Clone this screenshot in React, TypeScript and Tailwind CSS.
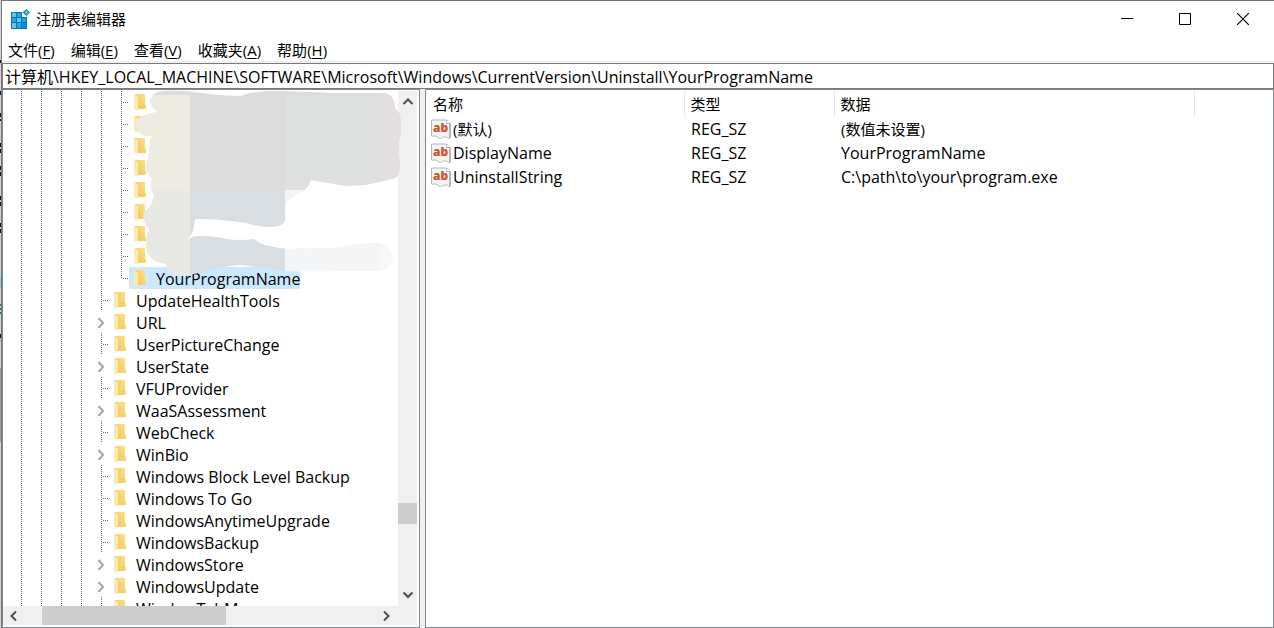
import React from 'react';

interface TreeNode {
    name: string;
    depth: number;
    expandable?: boolean;
    selected?: boolean;
}

interface RegistryValue {
    name: string;
    type: string;
    data: string;
    isDefault?: boolean;
}

const menus = [
    { label: '文件', hotkey: 'F' },
    { label: '编辑', hotkey: 'E' },
    { label: '查看', hotkey: 'V' },
    { label: '收藏夹', hotkey: 'A' },
    { label: '帮助', hotkey: 'H' },
];

const nodes: TreeNode[] = [
    ...Array.from({ length: 8 }, () => ({ name: '', depth: 5 })),
    { name: 'YourProgramName', depth: 5, selected: true },
    { name: 'UpdateHealthTools', depth: 4 },
    { name: 'URL', depth: 4, expandable: true },
    { name: 'UserPictureChange', depth: 4 },
    { name: 'UserState', depth: 4, expandable: true },
    { name: 'VFUProvider', depth: 4 },
    { name: 'WaaSAssessment', depth: 4, expandable: true },
    { name: 'WebCheck', depth: 4 },
    { name: 'WinBio', depth: 4, expandable: true },
    { name: 'Windows Block Level Backup', depth: 4 },
    { name: 'Windows To Go', depth: 4 },
    { name: 'WindowsAnytimeUpgrade', depth: 4 },
    { name: 'WindowsBackup', depth: 4 },
    { name: 'WindowsStore', depth: 4, expandable: true },
    { name: 'WindowsUpdate', depth: 4, expandable: true },
    { name: 'WindowTabManager', depth: 4 },
];

const values: RegistryValue[] = [
    { name: '(默认)', type: 'REG_SZ', data: '(数值未设置)', isDefault: true },
    { name: 'DisplayName', type: 'REG_SZ', data: 'YourProgramName' },
    { name: 'UninstallString', type: 'REG_SZ', data: 'C:\\path\\to\\your\\program.exe' },
];

const RegeditIcon = () => (
    <svg className="w-5 h-5" viewBox="0 0 20 20" aria-hidden="true">
        <path d="M1 3h11v5h5v12H1z" fill="#0a76b4" />
        <path d="M2 4h4v4H2zM7 9h4v4H7zM2 14h4v5H2z" fill="#5cc8f2" />
        <path d="M7 4h4v4H7zM2 9h4v4H2zM12 9h4v4h-4zM7 14h4v5H7z" fill="#27a3e0" />
        <path d="M12 14h4v5h-4z" fill="#0f8fd2" />
        <path d="M16.500 0l3.500 3.500-3.500 3.500-4-3.500z" fill="#1c85b8" />
        <path d="M16.500 1.500l2 2-2 2-2-2z" fill="#6cc3e6" />
    </svg>
);

const FolderIcon = () => (
    <svg className="w-3 h-[18px] shrink-0" viewBox="0 0 12 18" aria-hidden="true">
        <defs>
            <linearGradient id="folder" x1="0" x2="1" y1="1" y2="0">
                <stop offset="0" stopColor="#eec65f" />
                <stop offset="1" stopColor="#fbe08a" />
            </linearGradient>
        </defs>
        <path d="M1 1h10v11h1v4H3z" fill="url(#folder)" />
        <path d="M0 1l4 2.500v12l-1 2.500L0 15.500z" fill="#ffe9a6" />
    </svg>
);

const StringIcon = () => (
    <svg className="w-5 h-5 shrink-0" viewBox="0 0 20 20" aria-hidden="true">
        <path d="M.5 1h15l3.500 3.500v15c-2 0-3-1.500-5-1.500-2.500 0-2.500 1.500-4.500 1.500s-3-2.500-5-2.500-2 .5-4 0z" fill="#f4f4f4" stroke="#b4b7ba" />
        <path d="M15.500 1v3.500H19" fill="#fff" stroke="#b4b7ba" />
        <path d="M19 5v14" stroke="#8f9498" />
        <text x="2" y="13" fontSize="12" fontWeight="800" fill="#d9532c" fontFamily="Open Sans, sans-serif">ab</text>
    </svg>
);

const Chevron: React.FC<{ className: string; d: string }> = ({ className, d }) => (
    <svg className={className} viewBox="0 0 12 12" fill="none" stroke="currentColor" strokeWidth="2" aria-hidden="true">
        <path d={d} />
    </svg>
);

const VerticalGuide = ({ half = false }: { half?: boolean }) => (
    <span
        className={`block w-px bg-[repeating-linear-gradient(to_bottom,#6b6b6b_0px_1px,transparent_1px_2px)] ${half ? 'h-3' : 'h-full'}`}
    />
);

const TreeRow: React.FC<{ node: TreeNode }> = ({ node }) => (
    <li className="flex h-[22px] shrink-0 items-stretch">
        {Array.from({ length: node.depth }, (_, i) => (
            <span key={i} className="w-5 shrink-0">
                <VerticalGuide />
            </span>
        ))}
        {node.expandable ? (
            <button aria-label={`展开 ${node.name}`} className="-ml-1 flex w-3 shrink-0 items-center text-[#a6a6a6]">
                <Chevron className="h-3 w-3" d="M1.500 2l4.500 5-4.500 5" />
            </button>
        ) : (
            <span className="flex w-2 shrink-0 items-center">
                <span className="h-full">
                    <VerticalGuide half={node.selected} />
                </span>
                <span className="h-px grow bg-[repeating-linear-gradient(to_right,transparent_0px_1px,#6b6b6b_1px_2px)]" />
            </span>
        )}
        <span className={`flex items-center gap-[10px] whitespace-nowrap pl-[5px] ${node.selected ? 'bg-[#cce8ff]' : ''}`}>
            <FolderIcon />
            <span className="pt-[2px]">{node.name}</span>
        </span>
    </li>
);

// Brush strokes hiding the neighbouring keys
const Smudge = () => (
    <svg className="pointer-events-none absolute top-0 left-[127px] h-[190px] w-[275px]" viewBox="130 90 275 190" aria-hidden="true">
        <clipPath id="smudge">
            <path d="M150 101Q151 92 164 91Q184 90 200 93Q220 96 240 96Q256 91 275 91Q310 92 330 93H385Q395 95 395 108Q401 112 401 122V132Q398 144 399 154Q402 172 396 178Q380 182 366 185Q345 187 334 184L311 180Q307 190 302 192Q290 198 286 203V219Q283 227 272 227Q256 227 246 223Q220 219 195 219Q194 234 187 240Q192 236 200 236Q218 236 226 239Q240 241 254 239Q258 244 270 246Q284 250 300 248Q330 249 345 246Q365 242 380 243Q393 248 393 257Q392 268 382 271H340Q310 272 285 271Q265 268 240 265Q228 265 208 271Q190 276 175 275Q166 272 166 264Q150 263 146 249Q146 236 149 229Q141 219 144 212Q152 207 154 195Q148 188 152 179Q143 171 146 163Q149 158 149 150Q149 142 152 136H146Q136 134 136 124Q138 114 157 112Q151 108 150 101Z" />
        </clipPath>
        <g clipPath="url(#smudge)">
            <path d="M130 90h60v100h-60z" fill="#eeebe3" />
            <path d="M190 90h95v100h-95z" fill="#dbdbdb" />
            <path d="M285 90h95v100h-95z" fill="#dde0de" />
            <path d="M380 90h30v100h-30z" fill="#e2dfde" />
            <path d="M130 90h250v5H130z" fill="#dcdcdc" />
            <path d="M130 190h60v90h-60z" fill="#e8e9e4" />
            <path d="M190 190h95v90h-95z" fill="#d8dee1" />
            <path d="M285 190h95v90h-95z" fill="#f4f5f7" />
            <path d="M380 190h30v90h-30z" fill="#f6f7f7" />
        </g>
    </svg>
);

const TitleBar = () => (
    <header className="flex h-9 shrink-0 items-center pl-2">
        <RegeditIcon />
        <h1 className="ml-[6px] grow">注册表编辑器</h1>
        <div className="flex h-full pr-[2px]">
            <button aria-label="最小化" className="flex h-full w-[58px] items-center justify-center">
                <svg className="w-3 h-3" viewBox="0 0 12 12"><path d="M0 5.500h12" stroke="#000" /></svg>
            </button>
            <button aria-label="最大化" className="flex h-full w-[58px] items-center justify-center">
                <svg className="w-3 h-3" viewBox="0 0 12 12"><path d="M.5.500h11v11H.5z" fill="none" stroke="#000" /></svg>
            </button>
            <button aria-label="关闭" className="flex h-full w-[58px] items-center justify-center">
                <svg className="w-3 h-3" viewBox="0 0 12 12"><path d="M0 0l12 12M12 0L0 12" stroke="#000" strokeWidth="1.200" /></svg>
            </button>
        </div>
    </header>
);

const MenuBar = () => (
    <nav className="flex h-6 shrink-0 items-center gap-4 pt-[2px] pl-[6px]">
        {menus.map((menu) => (
            <button key={menu.hotkey}>
                {menu.label}(<u className="underline-offset-2">{menu.hotkey}</u>)
            </button>
        ))}
    </nav>
);

const KeyTree = () => (
    <section aria-label="注册表项" className="relative flex w-[418px] shrink-0 flex-col border border-[#828790] bg-white pt-px pr-[2px] pb-[2px]">
        <div className="flex min-h-0 grow">
            <ul className="flex min-w-0 grow flex-col overflow-hidden pl-[18px] text-[16px] leading-5">
                {nodes.map((node, i) => (
                    <TreeRow key={i} node={node} />
                ))}
            </ul>
            <div className="flex w-[19px] shrink-0 flex-col bg-[#f0f0f0] text-[#505050]">
                <button aria-label="向上滚动" className="flex h-5 items-center justify-center">
                    <Chevron className="h-3 w-3" d="M1.500 9l4.500-4.500 4.500 4.500" />
                </button>
                <div className="flex grow flex-col">
                    <div className="grow-[391]" />
                    <div className="h-[21px] bg-[#cdcdcd]" />
                    <div className="grow-[62]" />
                </div>
                <button aria-label="向下滚动" className="flex h-5 items-center justify-center">
                    <Chevron className="h-3 w-3" d="M1.500 2.500l4.500 4.500 4.500-4.500" />
                </button>
            </div>
        </div>
        <div className="flex h-[19px] shrink-0 bg-[#f0f0f0] text-[#505050]">
            <button aria-label="向左滚动" className="flex w-5 items-center justify-center">
                <Chevron className="h-3 w-3" d="M9 1.500l-4.500 4.500 4.500 4.500" />
            </button>
            <div className="flex grow">
                <div className="w-[19px]" />
                <div className="w-[184px] bg-[#cdcdcd]" />
            </div>
            <button aria-label="向右滚动" className="mr-5 flex w-5 items-center justify-center">
                <Chevron className="h-3 w-3" d="M3 1.500l4.500 4.500-4.500 4.500" />
            </button>
        </div>
        <Smudge />
    </section>
);

const ValueList = () => (
    <section aria-label="值" className="ml-[5px] min-w-0 grow border border-[#828790] bg-white pt-px">
        <table className="w-full table-fixed border-collapse text-left">
            <thead>
                <tr className="h-[26px]">
                    <th className="w-[258px] border-r border-[#e5e5e5] p-0 pl-[7px] font-normal">名称</th>
                    <th className="w-[150px] border-r border-[#e5e5e5] p-0 pl-[6px] font-normal">类型</th>
                    <th className="w-[360px] border-r border-[#e5e5e5] p-0 pl-[6px] font-normal">数据</th>
                    <td />
                </tr>
            </thead>
            <tbody>
                {values.map((value) => (
                    <tr key={value.name} className={`h-6 leading-5 ${value.isDefault ? 'text-[15px]' : 'text-[16px]'}`}>
                        <td className="p-0 pl-[5px]">
                            <span className="flex items-center gap-[2px]">
                                <StringIcon />
                                {value.name}
                            </span>
                        </td>
                        <td className="p-0 pl-[7px] text-[16px] leading-5">{value.type}</td>
                        <td className="p-0 pl-[7px]">{value.data}</td>
                        <td />
                    </tr>
                ))}
            </tbody>
        </table>
    </section>
);

// Sliver of the window lying behind this one
const Backdrop = () => (
    <svg className="h-full w-px shrink-0" preserveAspectRatio="none" viewBox="0 0 1 628" aria-hidden="true">
        <path d="M.5 60v3M.5 91v5M.5 113v8M.5 143v10M.5 166v12M.5 196v10M.5 223v10M.5 334v4" stroke="#1a1a1a" strokeDasharray="4 2" />
        <path d="M.5 278v10M.5 338v4" stroke="#8fd3d8" />
        <path d="M.5 304v12" stroke="#1c8a2c" strokeDasharray="2 2" />
        <path d="M.5 368v74" stroke="#a3a2a8" />
    </svg>
);

const App: React.FC = () => {
    return (
        <div className="flex h-screen bg-[#d5d3da] font-['Open_Sans','Noto_Sans_CJK_SC',sans-serif] text-[15px] leading-5 text-black">
            <Backdrop />
            <div className="flex min-w-0 grow flex-col border-t border-l border-[#747478] bg-white">
                <TitleBar />
                <MenuBar />
                <div className="shrink-0 bg-[#f0f0f0] pt-[2px]">
                    <input
                        aria-label="地址"
                        className="block h-[26px] w-full border border-[#7a7a7a] bg-white px-[2px] text-[16px] outline-none"
                        defaultValue="计算机\HKEY_LOCAL_MACHINE\SOFTWARE\Microsoft\Windows\CurrentVersion\Uninstall\YourProgramName"
                    />
                </div>
                <main className="flex min-h-0 grow bg-[#f0f0f0]">
                    <KeyTree />
                    <ValueList />
                </main>
            </div>
        </div>
    );
};

export default App;
